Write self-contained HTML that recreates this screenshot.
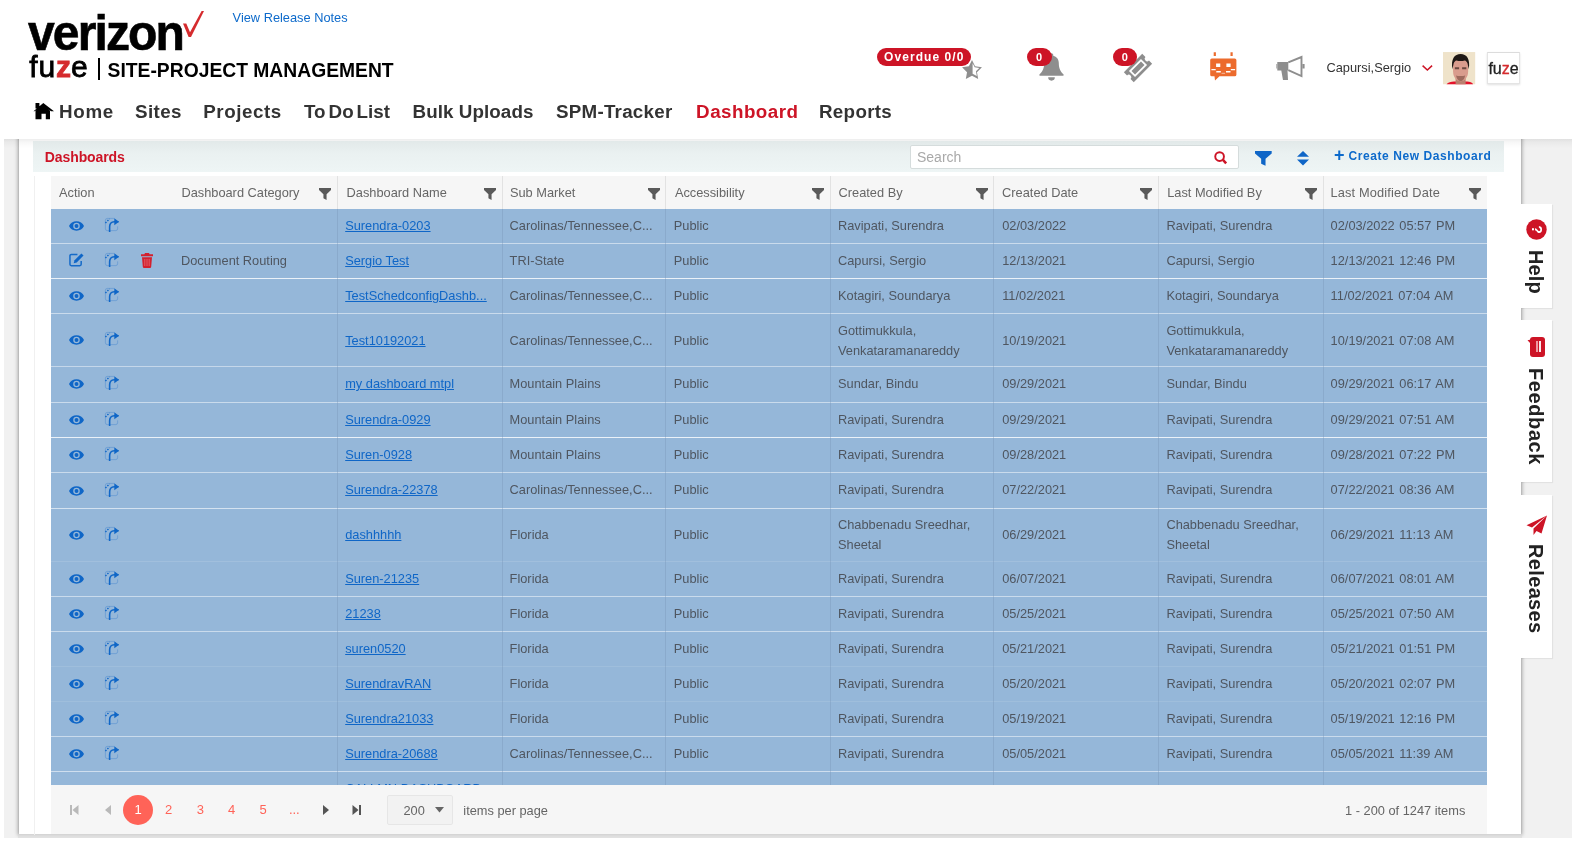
<!DOCTYPE html>
<html lang="en"><head><meta charset="utf-8"><title>Fuze | Site-Project Management - Dashboards</title>
<style>
html,body{margin:0;padding:0}
body{width:1576px;height:850px;position:relative;overflow:hidden;background:#fff;
 font-family:"Liberation Sans",Arial,sans-serif;color:#333;-webkit-font-smoothing:antialiased;will-change:transform}
svg{display:block;overflow:visible}
.abs{position:absolute}

/* ---------- top header ---------- */
.vz{position:absolute;left:28.3px;top:7.6px;font-weight:bold;font-size:50px;letter-spacing:-2px;color:#000;line-height:1;white-space:nowrap;transform-origin:0 0;transform:scaleX(.962);-webkit-text-stroke:.6px #000}
.vzcheck{position:absolute;left:183px;top:11.2px;width:21px;height:26.2px}
.relnotes{position:absolute;left:232.6px;top:11.4px;font-size:12.8px;line-height:14px;color:#0d6acb;white-space:nowrap}
.fuze{position:absolute;left:29.3px;top:52px;font-size:30px;line-height:30px;color:#000;white-space:nowrap;letter-spacing:.8px;-webkit-text-stroke:.8px currentColor}
.fuze i{font-style:normal;color:#d52b2e;font-weight:bold;letter-spacing:0}
.vbar{position:absolute;left:98.4px;top:57.7px;width:2px;height:22.3px;background:#000}
.spm{position:absolute;left:107.6px;top:59.8px;font-size:19.3px;line-height:22px;font-weight:bold;color:#000;white-space:nowrap}

.nav{position:absolute;top:101px;height:22px;line-height:22px;font-size:18.8px;font-weight:bold;color:#333;white-space:nowrap}
.nav.on{color:#cd1426}
.homeic{position:absolute;left:34.5px;top:102.8px;width:18px;height:16.2px}

.pill{position:absolute;top:47.6px;height:18px;border-radius:9px;background:#cd1426;color:#fff;font-weight:bold;font-size:12px;line-height:18px;text-align:center;white-space:nowrap;overflow:hidden}
.hic{position:absolute}
.uname{position:absolute;left:1326.5px;top:60px;font-size:12.8px;line-height:15px;color:#333;white-space:nowrap}
.chev{position:absolute;left:1422px;top:64.6px;width:10.7px;height:5.8px}
.photo{position:absolute;left:1443px;top:52px;width:32.2px;height:32.3px}
.fzbox{position:absolute;left:1487px;top:52px;width:33px;height:32px;background:#fff;border:1px solid #e4e4e4;box-sizing:border-box;box-shadow:0 1px 2px rgba(0,0,0,.12);
  font-size:16px;line-height:31px;text-align:center;color:#222;-webkit-text-stroke:.3px currentColor;border-top:1.5px solid #dcdcdc}
.fzbox i{font-style:normal;color:#d52b2e}

/* ---------- shell ---------- */
.shell{position:absolute;left:4px;top:139px;width:1568px;height:699px;background:#f1f1f1;overflow:hidden}
.card{position:absolute;left:15px;top:-8px;width:1501.5px;height:703px;background:#fff;
 box-shadow:0 0 4px 1px rgba(0,0,0,.33),0 2px 2px rgba(0,0,0,.1)}
.card:after{content:"";position:absolute;left:-1.5px;right:-1.5px;top:100%;height:5px;background:linear-gradient(#d2d2d2,#dedede 40%,#e4e4e4)}
.shell:after{content:"";position:absolute;left:0;top:0;width:100%;height:9px;background:linear-gradient(rgba(0,0,0,.07),rgba(0,0,0,.03) 35%,rgba(0,0,0,0))}
.phead{position:absolute;left:33px;top:141.3px;width:1471px;height:30.5px;
 background:linear-gradient(#e2e9e9,#eaf1f1 40%,#eef5f5)}
.ptitle{position:absolute;left:11.8px;top:7.8px;font-size:14px;line-height:16px;font-weight:bold;color:#cd1426;letter-spacing:-0.1px}
.search{position:absolute;left:877px;top:3.9px;width:329px;height:23.5px;box-sizing:border-box;background:#fff;border:1px solid #d5dcdc;border-radius:2px}
.search .ph{position:absolute;left:6px;top:2.6px;font-size:14px;line-height:17px;color:#a9a9a9}
.search .mag{position:absolute;right:11px;top:4.4px;width:13.5px;height:13.5px}
.tfilter{position:absolute;left:1222.2px;top:10.1px;width:16.7px;height:14.8px;fill:#0f66c7}
.tsort{position:absolute;left:1263.6px;top:10.1px;width:12px;height:14.4px}
.create{position:absolute;left:1301px;top:7px;font-size:12px;letter-spacing:.58px;line-height:15px;font-weight:bold;color:#0d6acb;white-space:nowrap}
.create .plus{font-size:18px;line-height:15px;font-weight:bold;vertical-align:-1.5px;letter-spacing:0}
.pborder{position:absolute;left:33.5px;top:176px;width:1470px;height:658.5px;border-left:1.6px solid #f0f0f0;box-sizing:border-box}

/* ---------- grid ---------- */
.grid{position:absolute;left:51px;top:176.4px;width:1436.3px;height:658px;font-size:12.8px;color:#555}
.ghead{position:absolute;left:0;top:0;width:100%;height:32.7px;background:#f6f6f6}
.th{position:absolute;top:0;height:32.7px;box-sizing:border-box;padding-left:1px;color:#666;line-height:32px;white-space:nowrap}
.hs{position:absolute;top:0;width:1px;height:100%;background:#e2e2e2}
.vs{position:absolute;top:0;width:1px;height:100%;background:rgba(120,150,185,.38)}
.th span{position:absolute;left:8px;top:1px}
.th .hf{position:absolute;right:6.4px;top:11.4px;width:12px;height:12px;fill:#5a5a5a}
.gbody{position:absolute;left:0;top:32.7px;width:100%;height:575.8px;overflow:hidden;background:#95b7d9}
.tr{position:absolute;left:0;width:100%;box-sizing:border-box;border-bottom:1.2px solid rgba(255,255,255,.45)}
.td{position:absolute;top:0;height:100%;box-sizing:border-box;padding-left:1px;display:flex;align-items:center;line-height:20.3px;white-space:nowrap;overflow:hidden;color:#4f5660}
.td.nb>span{padding-left:6.6px}
.td>span{padding-left:6.6px}
.tr.r4 .td>span{padding-top:2px}
.td.lastc>span{word-spacing:1.1px}
.lnk{color:#0f66c7;text-decoration:underline}
.ic{position:absolute;top:50%}
.ic.eye{left:18px;width:15px;height:10px;margin-top:-5px}
.ic.edit{left:18px;width:15px;height:14px;margin-top:-8px}
.ic.share{left:53px;width:15px;height:15px;margin-top:-9px}
.ic.trash{left:90px;width:12px;height:15px;margin-top:-8px}

/* ---------- pager ---------- */
.pager{position:absolute;left:0;top:608.5px;width:100%;height:49.5px;background:#f6f6f6;color:#656565}
.pg{position:absolute;top:17px;width:16px;height:16px;fill:#555}
.pg.dis{fill:#b9b9b9}
.pn{position:absolute;top:10px;width:30px;height:30px;line-height:30px;text-align:center;color:#ff6358;font-size:13px}
.pn.cur{background:#ff6358;color:#fff;border-radius:50%}
.psel{position:absolute;left:336px;top:19.5px;width:66px;height:30px;margin-top:-9.5px;box-sizing:border-box;background:#f2f2f2;border:1px solid #e6e6e6;border-radius:2px}
.psel span{position:absolute;left:15.5px;top:1px;line-height:27px;font-size:12.8px;color:#656565}
.psel svg{position:absolute;left:47px;top:11px;width:9px;height:5.5px;fill:#656565}
.ipp{position:absolute;left:412.3px;top:17px;line-height:18px;font-size:12.8px;white-space:nowrap}
.pinfo{position:absolute;right:22px;top:17px;line-height:18px;font-size:12.8px;white-space:nowrap}

/* ---------- side tabs ---------- */
.tab{position:absolute;left:1521px;width:30.5px;background:#fff;box-shadow:1px 1px 1px rgba(0,0,0,.06)}
.tab .ti{position:absolute;left:5px;top:15px;width:21px;height:21px}
.tab span{position:absolute;left:15px;top:47px;transform-origin:0 0;transform:rotate(90deg) translate(0,-50%);font-weight:bold;font-size:20px;line-height:24px;color:#222;white-space:nowrap;letter-spacing:0.2px}
</style></head>
<body>
<div class="vz">verizon</div><svg class="vzcheck" viewBox="0 0 21 26"><path fill="#d52b2e" d="M0 12.3h3.3l3.7 8.9L18.6 0H21L8 26H5.6z"/></svg><a class="relnotes">View Release Notes</a><div class="fuze">fu<i>z</i>e</div><div class="vbar"></div><div class="spm">SITE-PROJECT MANAGEMENT</div>
<svg preserveAspectRatio="none" class="homeic" viewBox="0 0 18 16.2"><path fill="#000" d="M8.3 0L19 8.3H16L8.3 2.4-.500 8.3H-1.5zM.500 0h3.9v5.5H.500zM.500 7.8L8.3 2 15 7.8v8.4h-4.2v-5.4H6.5v5.4h-6z"/></svg><a class="nav" style="left:59px;letter-spacing:.67px">Home</a><a class="nav" style="left:135px;letter-spacing:.4px">Sites</a><a class="nav" style="left:203.2px;letter-spacing:.56px">Projects</a><a class="nav" style="left:304px;word-spacing:-2.2px">To Do List</a><a class="nav" style="left:412.6px;letter-spacing:.07px">Bulk Uploads</a><a class="nav" style="left:556px;letter-spacing:.24px">SPM-Tracker</a><a class="nav on" style="left:696.1px;letter-spacing:.47px">Dashboard</a><a class="nav" style="left:819px;letter-spacing:.3px">Reports</a>
<div class="pill" style="left:876.5px;width:94.5px;letter-spacing:1.05px;text-indent:1px">Overdue 0/0</div><svg class="hic" style="left:961.5px;top:60px;width:20px;height:19px" viewBox="0 0 20 19.1"><path fill="#8e8e8e" d="M10 0l3.1 6.3 6.9 1-5 4.9 1.2 6.9L10 15.8 3.8 19.1 5 12.2 0 7.3l6.9-1z"/><path fill="#fff" d="M10.6 3.2l2.1 4.2 4.6.700-3.3 3.3.800 4.6-4.2-2.2z"/></svg><svg class="hic" style="left:1039px;top:53px;width:25px;height:28px" viewBox="0 0 24 26.2"><path fill="#8e8e8e" d="M12 0c1 0 1.7.700 1.7 1.7v.600c3.2.800 5.3 3.5 5.3 7 0 5.3 1.8 8.5 4.4 10.7.600.5.200 1.5-.600 1.5H1.2c-.800 0-1.2-1-.600-1.5C3.2 17.8 5 14.6 5 9.3c0-3.5 2.1-6.2 5.3-7v-.600C10.3.700 11 0 12 0zM8.8 23h6.4a3.2 3.2 0 0 1-6.4 0z"/></svg><div class="pill" style="left:1026.5px;width:25px;font-size:11px">0</div><svg class="hic" style="left:1123.5px;top:53.5px;width:28px;height:28px" viewBox="0 0 28 28"><g transform="rotate(-45 14 14)"><path fill="#8e8e8e" fill-rule="evenodd" d="M1 7h26v4.5a2.5 2.5 0 0 0 0 5V21H1v-4.5a2.5 2.5 0 0 0 0-5zM5.5 9.7v8.6h17V9.7zM7.3 11.5h13.4v5H7.3z"/></g></svg><div class="pill" style="left:1112.5px;width:24.5px;font-size:11px">0</div><svg class="hic" style="left:1210.4px;top:51.5px;width:26.6px;height:28.8px" viewBox="0 0 26.6 28.8"><path fill="#ec6b2d" d="M3.7.300h2.2v3.8H3.7zM20.5.300h2.2v3.8h-2.2zM1.8 6.4h23a1.6 1.6 0 0 1 1.6 1.6v14.7a1.6 1.6 0 0 1-1.6 1.6H9.5L5 28.5l-.500-4.2H1.8a1.6 1.6 0 0 1-1.6-1.6V8a1.6 1.6 0 0 1 1.6-1.6z"/><path fill="#fff" d="M6.1 11.6h4.2v3.3H6.1zM16.4 11.6h4.2v3.3h-4.2zM1.4 16.9h4.3v1.3H1.4zM20.8 16.9h4.3v1.3h-4.3zM6.3 19h4.5v1.4H6.3zM16 19h4.5v1.4H16z"/><path fill="#fff" opacity=".55" d="M11.5 20.8h3.6v1h-3.6z"/></svg><svg class="hic" style="left:1275.7px;top:56px;width:28.6px;height:24px" viewBox="0 0 28.6 24"><path fill="#8e8e8e" d="M1.3 6h11v8.5h-11zM5.3 14.5h6.2l.500 9.5H7z"/><path fill="#8e8e8e" opacity=".6" d="M0 8h1.3v4.5H0z"/><path fill="none" stroke="#8e8e8e" stroke-width="1.9" d="M12.3 6.3L25.5 1v19L12.3 14.2"/><path fill="#8e8e8e" d="M26.4 8h2.2v4.5h-2.2z"/></svg><span class="uname">Capursi,Sergio</span><svg class="chev" viewBox="0 0 10.7 5.8"><path fill="none" stroke="#cd1426" stroke-width="1.5" d="M.600.6l4.75 4.4 4.75-4.4"/></svg><svg class="photo" viewBox="0 0 32 32"><rect width="32" height="32" fill="#efe3ca"/><path fill="#e5112b" d="M3.5 32c1.5-2 4.5-2.6 7.5-2.8h13c2.5.200 5 .800 6 2.8z"/><path fill="#b9806f" d="M12.5 24h10v8h-10z"/><path fill="#d99c8d" d="M10 12c0-5 3-7.5 7.5-7.5S25 7 25 12v7c0 5.5-3 10-7.5 10S10 24.5 10 19z"/><path fill="#1f1916" d="M9.4 17C7.6 7 11.5 2 17.5 2s9.9 5 8.1 15l-1.2-5.5c-.700-2-1.6-2.8-2.8-3.1-2.4.800-5.8.800-8.2 0-1.2.300-2.1 1.1-2.8 3.1z"/><path fill="#4e332c" d="M11.8 15.2H16v2h-4.2zM19 15.2h4.2v2H19z" opacity=".8"/><path fill="#8a5a4e" d="M13 23c1.5 1.2 7.5 1.2 9 0-.500 3.5-2.3 5.8-4.5 5.8S13.5 26.5 13 23z" opacity=".75"/></svg><div class="fzbox">fu<i>z</i>e</div>
<div class="shell"><div class="card"></div></div>
<div class="phead"><span class="ptitle">Dashboards</span><div class="search"><span class="ph">Search</span><svg class="mag" viewBox="0 0 14 14"><circle cx="5.8" cy="5.8" r="4.5" fill="none" stroke="#cd1426" stroke-width="2"/><path d="M9.3 9.3L12.6 12.8" stroke="#cd1426" stroke-width="2.6" stroke-linecap="butt"/></svg></div><svg class="tfilter" viewBox="0 0 13 13" preserveAspectRatio="none"><path d="M0 0h13v2.3L8.2 6.8V13L4.8 11.2V6.8L0 2.3z"/></svg><svg class="tsort" viewBox="0 0 12 16" preserveAspectRatio="none"><path fill="#0f66c7" d="M6 0l6 6.5H0zM6 16l6-6.5H0z"/></svg><span class="create"><b class="plus">+</b> Create New Dashboard</span></div>
<div class="pborder"></div>
<div class="grid">
<div class="ghead"><div class="th first" style="left:0px;width:122.4px"><span style="left:8px">Action</span></div><div class="th first" style="left:122.4px;width:164.2px"><span style="left:8px">Dashboard Category</span><svg class="hf" viewBox="0 0 13 13"><path d="M0 0h13v2.3L8.2 6.8V13L4.8 11.2V6.8L0 2.3z"/></svg></div><div class="th" style="left:286.6px;width:164.4px"><span style="left:9px">Dashboard Name</span><svg class="hf" viewBox="0 0 13 13"><path d="M0 0h13v2.3L8.2 6.8V13L4.8 11.2V6.8L0 2.3z"/></svg></div><div class="th" style="left:451px;width:164.2px"><span style="left:7.9px">Sub Market</span><svg class="hf" viewBox="0 0 13 13"><path d="M0 0h13v2.3L8.2 6.8V13L4.8 11.2V6.8L0 2.3z"/></svg></div><div class="th" style="left:615.2px;width:164.2px"><span style="left:8.7px">Accessibility</span><svg class="hf" viewBox="0 0 13 13"><path d="M0 0h13v2.3L8.2 6.8V13L4.8 11.2V6.8L0 2.3z"/></svg></div><div class="th" style="left:779.4px;width:164.2px"><span style="left:8.2px">Created By</span><svg class="hf" viewBox="0 0 13 13"><path d="M0 0h13v2.3L8.2 6.8V13L4.8 11.2V6.8L0 2.3z"/></svg></div><div class="th" style="left:943.6px;width:164.2px"><span style="left:7.5px">Created Date</span><svg class="hf" viewBox="0 0 13 13"><path d="M0 0h13v2.3L8.2 6.8V13L4.8 11.2V6.8L0 2.3z"/></svg></div><div class="th" style="left:1107.8px;width:164.2px"><span style="left:8.4px">Last Modified By</span><svg class="hf" viewBox="0 0 13 13"><path d="M0 0h13v2.3L8.2 6.8V13L4.8 11.2V6.8L0 2.3z"/></svg></div><div class="th" style="left:1272px;width:164.3px"><span style="left:7.4px;letter-spacing:.16px">Last Modified Date</span><svg class="hf" viewBox="0 0 13 13"><path d="M0 0h13v2.3L8.2 6.8V13L4.8 11.2V6.8L0 2.3z"/></svg></div><i class="hs" style="left:285.9px"></i><i class="hs" style="left:450.6px"></i><i class="hs" style="left:613.8px"></i><i class="hs" style="left:778.9px"></i><i class="hs" style="left:942.2px"></i><i class="hs" style="left:1107.1px"></i><i class="hs" style="left:1271.5px"></i></div>
<div class="gbody">
<div class="tr" style="top:0px;height:35.1px;border-bottom-color:rgba(255,255,255,0.5)"><div class="td act" style="left:0;width:122.4px"><svg class="ic eye" viewBox="0 0 16 10"><path fill="#0f66c7" fill-rule="evenodd" d="M8 0C4.4 0 1.4 2 0 5c1.4 3 4.4 5 8 5s6.6-2 8-5C14.6 2 11.6 0 8 0zm0 1.5a3.5 3.5 0 1 1 0 7 3.5 3.5 0 0 1 0-7z"/><circle cx="8" cy="5" r="2.1" fill="#0f66c7"/></svg><svg class="ic share" viewBox="0 0 16 16"><path fill="none" stroke="#0f66c7" stroke-opacity=".28" stroke-width="1" d="M11 1.5H3.5a2 2 0 0 0-2 2v9a2 2 0 0 0 2 2h9a2 2 0 0 0 2-2V10"/><path fill="none" stroke="#0f66c7" stroke-width="1.7" stroke-linecap="butt" d="M6 16V10.5c0-3 1.5-5.5 5-5.5h4.5"/><path fill="#0f66c7" d="M11 1.3l5 3.7-5 3.7z"/><path fill="none" stroke="#0f66c7" stroke-width="1.5" stroke-dasharray="1.6 1.4" d="M1.5 6.5L6 2"/></svg></div><div class="td nb" style="left:122.4px;width:164.2px"><span></span></div><div class="td" style="left:286.6px;width:164.4px"><span><a class="lnk">Surendra-0203</a></span></div><div class="td" style="left:451px;width:164.2px"><span>Carolinas/Tennessee,C...</span></div><div class="td" style="left:615.2px;width:164.2px"><span>Public</span></div><div class="td" style="left:779.4px;width:164.2px"><span>Ravipati, Surendra</span></div><div class="td" style="left:943.6px;width:164.2px"><span>02/03/2022</span></div><div class="td" style="left:1107.8px;width:164.2px"><span>Ravipati, Surendra</span></div><div class="td lastc" style="left:1272px;width:164.3px"><span>02/03/2022 05:57 PM</span></div></div>
<div class="tr" style="top:35.1px;height:35.1px;border-bottom-color:rgba(255,255,255,0.8)"><div class="td act" style="left:0;width:122.4px"><svg class="ic edit" viewBox="0 0 16 14"><path fill="none" stroke="#0f66c7" stroke-width="1.6" d="M9 1H2.5A1.5 1.5 0 0 0 1 2.5v9A1.5 1.5 0 0 0 2.5 13h9a1.5 1.5 0 0 0 1.5-1.5V8" stroke-opacity=".95"/><path fill="#0f66c7" d="M13.2 0l2.3 2.3-7.3 7.3L5 10.5l.900-3.2z"/></svg><svg class="ic share" viewBox="0 0 16 16"><path fill="none" stroke="#0f66c7" stroke-opacity=".28" stroke-width="1" d="M11 1.5H3.5a2 2 0 0 0-2 2v9a2 2 0 0 0 2 2h9a2 2 0 0 0 2-2V10"/><path fill="none" stroke="#0f66c7" stroke-width="1.7" stroke-linecap="butt" d="M6 16V10.5c0-3 1.5-5.5 5-5.5h4.5"/><path fill="#0f66c7" d="M11 1.3l5 3.7-5 3.7z"/><path fill="none" stroke="#0f66c7" stroke-width="1.5" stroke-dasharray="1.6 1.4" d="M1.5 6.5L6 2"/></svg><svg class="ic trash" viewBox="0 0 12 15"><path fill="#d3202e" d="M4 0h4l.600 1.2H12v2H0v-2h3.4zM1 4.2h10l-.800 9.6a1.3 1.3 0 0 1-1.3 1.2H3.1a1.3 1.3 0 0 1-1.3-1.2z"/><path stroke="#e77a83" stroke-width=".7" d="M3.8 6v7M6 6v7M8.2 6v7"/></svg></div><div class="td nb" style="left:122.4px;width:164.2px"><span>Document Routing</span></div><div class="td" style="left:286.6px;width:164.4px"><span><a class="lnk">Sergio Test</a></span></div><div class="td" style="left:451px;width:164.2px"><span>TRI-State</span></div><div class="td" style="left:615.2px;width:164.2px"><span>Public</span></div><div class="td" style="left:779.4px;width:164.2px"><span>Capursi, Sergio</span></div><div class="td" style="left:943.6px;width:164.2px"><span>12/13/2021</span></div><div class="td" style="left:1107.8px;width:164.2px"><span>Capursi, Sergio</span></div><div class="td lastc" style="left:1272px;width:164.3px"><span>12/13/2021 12:46 PM</span></div></div>
<div class="tr" style="top:70.2px;height:34.8px;border-bottom-color:rgba(255,255,255,0.5)"><div class="td act" style="left:0;width:122.4px"><svg class="ic eye" viewBox="0 0 16 10"><path fill="#0f66c7" fill-rule="evenodd" d="M8 0C4.4 0 1.4 2 0 5c1.4 3 4.4 5 8 5s6.6-2 8-5C14.6 2 11.6 0 8 0zm0 1.5a3.5 3.5 0 1 1 0 7 3.5 3.5 0 0 1 0-7z"/><circle cx="8" cy="5" r="2.1" fill="#0f66c7"/></svg><svg class="ic share" viewBox="0 0 16 16"><path fill="none" stroke="#0f66c7" stroke-opacity=".28" stroke-width="1" d="M11 1.5H3.5a2 2 0 0 0-2 2v9a2 2 0 0 0 2 2h9a2 2 0 0 0 2-2V10"/><path fill="none" stroke="#0f66c7" stroke-width="1.7" stroke-linecap="butt" d="M6 16V10.5c0-3 1.5-5.5 5-5.5h4.5"/><path fill="#0f66c7" d="M11 1.3l5 3.7-5 3.7z"/><path fill="none" stroke="#0f66c7" stroke-width="1.5" stroke-dasharray="1.6 1.4" d="M1.5 6.5L6 2"/></svg></div><div class="td nb" style="left:122.4px;width:164.2px"><span></span></div><div class="td" style="left:286.6px;width:164.4px"><span><a class="lnk">TestSchedconfigDashb...</a></span></div><div class="td" style="left:451px;width:164.2px"><span>Carolinas/Tennessee,C...</span></div><div class="td" style="left:615.2px;width:164.2px"><span>Public</span></div><div class="td" style="left:779.4px;width:164.2px"><span>Kotagiri, Soundarya</span></div><div class="td" style="left:943.6px;width:164.2px"><span>11/02/2021</span></div><div class="td" style="left:1107.8px;width:164.2px"><span>Kotagiri, Soundarya</span></div><div class="td lastc" style="left:1272px;width:164.3px"><span>11/02/2021 07:04 AM</span></div></div>
<div class="tr r4" style="top:105px;height:52.5px;border-bottom-color:rgba(255,255,255,0.45)"><div class="td act" style="left:0;width:122.4px"><svg class="ic eye" viewBox="0 0 16 10"><path fill="#0f66c7" fill-rule="evenodd" d="M8 0C4.4 0 1.4 2 0 5c1.4 3 4.4 5 8 5s6.6-2 8-5C14.6 2 11.6 0 8 0zm0 1.5a3.5 3.5 0 1 1 0 7 3.5 3.5 0 0 1 0-7z"/><circle cx="8" cy="5" r="2.1" fill="#0f66c7"/></svg><svg class="ic share" viewBox="0 0 16 16"><path fill="none" stroke="#0f66c7" stroke-opacity=".28" stroke-width="1" d="M11 1.5H3.5a2 2 0 0 0-2 2v9a2 2 0 0 0 2 2h9a2 2 0 0 0 2-2V10"/><path fill="none" stroke="#0f66c7" stroke-width="1.7" stroke-linecap="butt" d="M6 16V10.5c0-3 1.5-5.5 5-5.5h4.5"/><path fill="#0f66c7" d="M11 1.3l5 3.7-5 3.7z"/><path fill="none" stroke="#0f66c7" stroke-width="1.5" stroke-dasharray="1.6 1.4" d="M1.5 6.5L6 2"/></svg></div><div class="td nb" style="left:122.4px;width:164.2px"><span></span></div><div class="td" style="left:286.6px;width:164.4px"><span><a class="lnk">Test10192021</a></span></div><div class="td" style="left:451px;width:164.2px"><span>Carolinas/Tennessee,C...</span></div><div class="td" style="left:615.2px;width:164.2px"><span>Public</span></div><div class="td" style="left:779.4px;width:164.2px"><span>Gottimukkula,<br>Venkataramanareddy</span></div><div class="td" style="left:943.6px;width:164.2px"><span>10/19/2021</span></div><div class="td" style="left:1107.8px;width:164.2px"><span>Gottimukkula,<br>Venkataramanareddy</span></div><div class="td lastc" style="left:1272px;width:164.3px"><span>10/19/2021 07:08 AM</span></div></div>
<div class="tr" style="top:157.5px;height:36.2px;border-bottom-color:rgba(255,255,255,0.5)"><div class="td act" style="left:0;width:122.4px"><svg class="ic eye" viewBox="0 0 16 10"><path fill="#0f66c7" fill-rule="evenodd" d="M8 0C4.4 0 1.4 2 0 5c1.4 3 4.4 5 8 5s6.6-2 8-5C14.6 2 11.6 0 8 0zm0 1.5a3.5 3.5 0 1 1 0 7 3.5 3.5 0 0 1 0-7z"/><circle cx="8" cy="5" r="2.1" fill="#0f66c7"/></svg><svg class="ic share" viewBox="0 0 16 16"><path fill="none" stroke="#0f66c7" stroke-opacity=".28" stroke-width="1" d="M11 1.5H3.5a2 2 0 0 0-2 2v9a2 2 0 0 0 2 2h9a2 2 0 0 0 2-2V10"/><path fill="none" stroke="#0f66c7" stroke-width="1.7" stroke-linecap="butt" d="M6 16V10.5c0-3 1.5-5.5 5-5.5h4.5"/><path fill="#0f66c7" d="M11 1.3l5 3.7-5 3.7z"/><path fill="none" stroke="#0f66c7" stroke-width="1.5" stroke-dasharray="1.6 1.4" d="M1.5 6.5L6 2"/></svg></div><div class="td nb" style="left:122.4px;width:164.2px"><span></span></div><div class="td" style="left:286.6px;width:164.4px"><span><a class="lnk">my dashboard mtpl</a></span></div><div class="td" style="left:451px;width:164.2px"><span>Mountain Plains</span></div><div class="td" style="left:615.2px;width:164.2px"><span>Public</span></div><div class="td" style="left:779.4px;width:164.2px"><span>Sundar, Bindu</span></div><div class="td" style="left:943.6px;width:164.2px"><span>09/29/2021</span></div><div class="td" style="left:1107.8px;width:164.2px"><span>Sundar, Bindu</span></div><div class="td lastc" style="left:1272px;width:164.3px"><span>09/29/2021 06:17 AM</span></div></div>
<div class="tr" style="top:193.7px;height:35.5px;border-bottom-color:rgba(255,255,255,0.8)"><div class="td act" style="left:0;width:122.4px"><svg class="ic eye" viewBox="0 0 16 10"><path fill="#0f66c7" fill-rule="evenodd" d="M8 0C4.4 0 1.4 2 0 5c1.4 3 4.4 5 8 5s6.6-2 8-5C14.6 2 11.6 0 8 0zm0 1.5a3.5 3.5 0 1 1 0 7 3.5 3.5 0 0 1 0-7z"/><circle cx="8" cy="5" r="2.1" fill="#0f66c7"/></svg><svg class="ic share" viewBox="0 0 16 16"><path fill="none" stroke="#0f66c7" stroke-opacity=".28" stroke-width="1" d="M11 1.5H3.5a2 2 0 0 0-2 2v9a2 2 0 0 0 2 2h9a2 2 0 0 0 2-2V10"/><path fill="none" stroke="#0f66c7" stroke-width="1.7" stroke-linecap="butt" d="M6 16V10.5c0-3 1.5-5.5 5-5.5h4.5"/><path fill="#0f66c7" d="M11 1.3l5 3.7-5 3.7z"/><path fill="none" stroke="#0f66c7" stroke-width="1.5" stroke-dasharray="1.6 1.4" d="M1.5 6.5L6 2"/></svg></div><div class="td nb" style="left:122.4px;width:164.2px"><span></span></div><div class="td" style="left:286.6px;width:164.4px"><span><a class="lnk">Surendra-0929</a></span></div><div class="td" style="left:451px;width:164.2px"><span>Mountain Plains</span></div><div class="td" style="left:615.2px;width:164.2px"><span>Public</span></div><div class="td" style="left:779.4px;width:164.2px"><span>Ravipati, Surendra</span></div><div class="td" style="left:943.6px;width:164.2px"><span>09/29/2021</span></div><div class="td" style="left:1107.8px;width:164.2px"><span>Ravipati, Surendra</span></div><div class="td lastc" style="left:1272px;width:164.3px"><span>09/29/2021 07:51 AM</span></div></div>
<div class="tr" style="top:229.2px;height:34.8px;border-bottom-color:rgba(255,255,255,0.5)"><div class="td act" style="left:0;width:122.4px"><svg class="ic eye" viewBox="0 0 16 10"><path fill="#0f66c7" fill-rule="evenodd" d="M8 0C4.4 0 1.4 2 0 5c1.4 3 4.4 5 8 5s6.6-2 8-5C14.6 2 11.6 0 8 0zm0 1.5a3.5 3.5 0 1 1 0 7 3.5 3.5 0 0 1 0-7z"/><circle cx="8" cy="5" r="2.1" fill="#0f66c7"/></svg><svg class="ic share" viewBox="0 0 16 16"><path fill="none" stroke="#0f66c7" stroke-opacity=".28" stroke-width="1" d="M11 1.5H3.5a2 2 0 0 0-2 2v9a2 2 0 0 0 2 2h9a2 2 0 0 0 2-2V10"/><path fill="none" stroke="#0f66c7" stroke-width="1.7" stroke-linecap="butt" d="M6 16V10.5c0-3 1.5-5.5 5-5.5h4.5"/><path fill="#0f66c7" d="M11 1.3l5 3.7-5 3.7z"/><path fill="none" stroke="#0f66c7" stroke-width="1.5" stroke-dasharray="1.6 1.4" d="M1.5 6.5L6 2"/></svg></div><div class="td nb" style="left:122.4px;width:164.2px"><span></span></div><div class="td" style="left:286.6px;width:164.4px"><span><a class="lnk">Suren-0928</a></span></div><div class="td" style="left:451px;width:164.2px"><span>Mountain Plains</span></div><div class="td" style="left:615.2px;width:164.2px"><span>Public</span></div><div class="td" style="left:779.4px;width:164.2px"><span>Ravipati, Surendra</span></div><div class="td" style="left:943.6px;width:164.2px"><span>09/28/2021</span></div><div class="td" style="left:1107.8px;width:164.2px"><span>Ravipati, Surendra</span></div><div class="td lastc" style="left:1272px;width:164.3px"><span>09/28/2021 07:22 PM</span></div></div>
<div class="tr" style="top:264px;height:36.1px;border-bottom-color:rgba(255,255,255,0.6)"><div class="td act" style="left:0;width:122.4px"><svg class="ic eye" viewBox="0 0 16 10"><path fill="#0f66c7" fill-rule="evenodd" d="M8 0C4.4 0 1.4 2 0 5c1.4 3 4.4 5 8 5s6.6-2 8-5C14.6 2 11.6 0 8 0zm0 1.5a3.5 3.5 0 1 1 0 7 3.5 3.5 0 0 1 0-7z"/><circle cx="8" cy="5" r="2.1" fill="#0f66c7"/></svg><svg class="ic share" viewBox="0 0 16 16"><path fill="none" stroke="#0f66c7" stroke-opacity=".28" stroke-width="1" d="M11 1.5H3.5a2 2 0 0 0-2 2v9a2 2 0 0 0 2 2h9a2 2 0 0 0 2-2V10"/><path fill="none" stroke="#0f66c7" stroke-width="1.7" stroke-linecap="butt" d="M6 16V10.5c0-3 1.5-5.5 5-5.5h4.5"/><path fill="#0f66c7" d="M11 1.3l5 3.7-5 3.7z"/><path fill="none" stroke="#0f66c7" stroke-width="1.5" stroke-dasharray="1.6 1.4" d="M1.5 6.5L6 2"/></svg></div><div class="td nb" style="left:122.4px;width:164.2px"><span></span></div><div class="td" style="left:286.6px;width:164.4px"><span><a class="lnk">Surendra-22378</a></span></div><div class="td" style="left:451px;width:164.2px"><span>Carolinas/Tennessee,C...</span></div><div class="td" style="left:615.2px;width:164.2px"><span>Public</span></div><div class="td" style="left:779.4px;width:164.2px"><span>Ravipati, Surendra</span></div><div class="td" style="left:943.6px;width:164.2px"><span>07/22/2021</span></div><div class="td" style="left:1107.8px;width:164.2px"><span>Ravipati, Surendra</span></div><div class="td lastc" style="left:1272px;width:164.3px"><span>07/22/2021 08:36 AM</span></div></div>
<div class="tr" style="top:300.1px;height:52.9px;border-bottom-color:rgba(255,255,255,0.12)"><div class="td act" style="left:0;width:122.4px"><svg class="ic eye" viewBox="0 0 16 10"><path fill="#0f66c7" fill-rule="evenodd" d="M8 0C4.4 0 1.4 2 0 5c1.4 3 4.4 5 8 5s6.6-2 8-5C14.6 2 11.6 0 8 0zm0 1.5a3.5 3.5 0 1 1 0 7 3.5 3.5 0 0 1 0-7z"/><circle cx="8" cy="5" r="2.1" fill="#0f66c7"/></svg><svg class="ic share" viewBox="0 0 16 16"><path fill="none" stroke="#0f66c7" stroke-opacity=".28" stroke-width="1" d="M11 1.5H3.5a2 2 0 0 0-2 2v9a2 2 0 0 0 2 2h9a2 2 0 0 0 2-2V10"/><path fill="none" stroke="#0f66c7" stroke-width="1.7" stroke-linecap="butt" d="M6 16V10.5c0-3 1.5-5.5 5-5.5h4.5"/><path fill="#0f66c7" d="M11 1.3l5 3.7-5 3.7z"/><path fill="none" stroke="#0f66c7" stroke-width="1.5" stroke-dasharray="1.6 1.4" d="M1.5 6.5L6 2"/></svg></div><div class="td nb" style="left:122.4px;width:164.2px"><span></span></div><div class="td" style="left:286.6px;width:164.4px"><span><a class="lnk">dashhhhh</a></span></div><div class="td" style="left:451px;width:164.2px"><span>Florida</span></div><div class="td" style="left:615.2px;width:164.2px"><span>Public</span></div><div class="td" style="left:779.4px;width:164.2px"><span>Chabbenadu Sreedhar,<br>Sheetal</span></div><div class="td" style="left:943.6px;width:164.2px"><span>06/29/2021</span></div><div class="td" style="left:1107.8px;width:164.2px"><span>Chabbenadu Sreedhar,<br>Sheetal</span></div><div class="td lastc" style="left:1272px;width:164.3px"><span>06/29/2021 11:13 AM</span></div></div>
<div class="tr" style="top:353px;height:35.2px;border-bottom-color:rgba(255,255,255,0.5)"><div class="td act" style="left:0;width:122.4px"><svg class="ic eye" viewBox="0 0 16 10"><path fill="#0f66c7" fill-rule="evenodd" d="M8 0C4.4 0 1.4 2 0 5c1.4 3 4.4 5 8 5s6.6-2 8-5C14.6 2 11.6 0 8 0zm0 1.5a3.5 3.5 0 1 1 0 7 3.5 3.5 0 0 1 0-7z"/><circle cx="8" cy="5" r="2.1" fill="#0f66c7"/></svg><svg class="ic share" viewBox="0 0 16 16"><path fill="none" stroke="#0f66c7" stroke-opacity=".28" stroke-width="1" d="M11 1.5H3.5a2 2 0 0 0-2 2v9a2 2 0 0 0 2 2h9a2 2 0 0 0 2-2V10"/><path fill="none" stroke="#0f66c7" stroke-width="1.7" stroke-linecap="butt" d="M6 16V10.5c0-3 1.5-5.5 5-5.5h4.5"/><path fill="#0f66c7" d="M11 1.3l5 3.7-5 3.7z"/><path fill="none" stroke="#0f66c7" stroke-width="1.5" stroke-dasharray="1.6 1.4" d="M1.5 6.5L6 2"/></svg></div><div class="td nb" style="left:122.4px;width:164.2px"><span></span></div><div class="td" style="left:286.6px;width:164.4px"><span><a class="lnk">Suren-21235</a></span></div><div class="td" style="left:451px;width:164.2px"><span>Florida</span></div><div class="td" style="left:615.2px;width:164.2px"><span>Public</span></div><div class="td" style="left:779.4px;width:164.2px"><span>Ravipati, Surendra</span></div><div class="td" style="left:943.6px;width:164.2px"><span>06/07/2021</span></div><div class="td" style="left:1107.8px;width:164.2px"><span>Ravipati, Surendra</span></div><div class="td lastc" style="left:1272px;width:164.3px"><span>06/07/2021 08:01 AM</span></div></div>
<div class="tr" style="top:388.2px;height:34.7px;border-bottom-color:rgba(255,255,255,0.5)"><div class="td act" style="left:0;width:122.4px"><svg class="ic eye" viewBox="0 0 16 10"><path fill="#0f66c7" fill-rule="evenodd" d="M8 0C4.4 0 1.4 2 0 5c1.4 3 4.4 5 8 5s6.6-2 8-5C14.6 2 11.6 0 8 0zm0 1.5a3.5 3.5 0 1 1 0 7 3.5 3.5 0 0 1 0-7z"/><circle cx="8" cy="5" r="2.1" fill="#0f66c7"/></svg><svg class="ic share" viewBox="0 0 16 16"><path fill="none" stroke="#0f66c7" stroke-opacity=".28" stroke-width="1" d="M11 1.5H3.5a2 2 0 0 0-2 2v9a2 2 0 0 0 2 2h9a2 2 0 0 0 2-2V10"/><path fill="none" stroke="#0f66c7" stroke-width="1.7" stroke-linecap="butt" d="M6 16V10.5c0-3 1.5-5.5 5-5.5h4.5"/><path fill="#0f66c7" d="M11 1.3l5 3.7-5 3.7z"/><path fill="none" stroke="#0f66c7" stroke-width="1.5" stroke-dasharray="1.6 1.4" d="M1.5 6.5L6 2"/></svg></div><div class="td nb" style="left:122.4px;width:164.2px"><span></span></div><div class="td" style="left:286.6px;width:164.4px"><span><a class="lnk">21238</a></span></div><div class="td" style="left:451px;width:164.2px"><span>Florida</span></div><div class="td" style="left:615.2px;width:164.2px"><span>Public</span></div><div class="td" style="left:779.4px;width:164.2px"><span>Ravipati, Surendra</span></div><div class="td" style="left:943.6px;width:164.2px"><span>05/25/2021</span></div><div class="td" style="left:1107.8px;width:164.2px"><span>Ravipati, Surendra</span></div><div class="td lastc" style="left:1272px;width:164.3px"><span>05/25/2021 07:50 AM</span></div></div>
<div class="tr" style="top:422.9px;height:35.1px;border-bottom-color:rgba(255,255,255,0.1)"><div class="td act" style="left:0;width:122.4px"><svg class="ic eye" viewBox="0 0 16 10"><path fill="#0f66c7" fill-rule="evenodd" d="M8 0C4.4 0 1.4 2 0 5c1.4 3 4.4 5 8 5s6.6-2 8-5C14.6 2 11.6 0 8 0zm0 1.5a3.5 3.5 0 1 1 0 7 3.5 3.5 0 0 1 0-7z"/><circle cx="8" cy="5" r="2.1" fill="#0f66c7"/></svg><svg class="ic share" viewBox="0 0 16 16"><path fill="none" stroke="#0f66c7" stroke-opacity=".28" stroke-width="1" d="M11 1.5H3.5a2 2 0 0 0-2 2v9a2 2 0 0 0 2 2h9a2 2 0 0 0 2-2V10"/><path fill="none" stroke="#0f66c7" stroke-width="1.7" stroke-linecap="butt" d="M6 16V10.5c0-3 1.5-5.5 5-5.5h4.5"/><path fill="#0f66c7" d="M11 1.3l5 3.7-5 3.7z"/><path fill="none" stroke="#0f66c7" stroke-width="1.5" stroke-dasharray="1.6 1.4" d="M1.5 6.5L6 2"/></svg></div><div class="td nb" style="left:122.4px;width:164.2px"><span></span></div><div class="td" style="left:286.6px;width:164.4px"><span><a class="lnk">suren0520</a></span></div><div class="td" style="left:451px;width:164.2px"><span>Florida</span></div><div class="td" style="left:615.2px;width:164.2px"><span>Public</span></div><div class="td" style="left:779.4px;width:164.2px"><span>Ravipati, Surendra</span></div><div class="td" style="left:943.6px;width:164.2px"><span>05/21/2021</span></div><div class="td" style="left:1107.8px;width:164.2px"><span>Ravipati, Surendra</span></div><div class="td lastc" style="left:1272px;width:164.3px"><span>05/21/2021 01:51 PM</span></div></div>
<div class="tr" style="top:458px;height:35.3px;border-bottom-color:rgba(255,255,255,0.1)"><div class="td act" style="left:0;width:122.4px"><svg class="ic eye" viewBox="0 0 16 10"><path fill="#0f66c7" fill-rule="evenodd" d="M8 0C4.4 0 1.4 2 0 5c1.4 3 4.4 5 8 5s6.6-2 8-5C14.6 2 11.6 0 8 0zm0 1.5a3.5 3.5 0 1 1 0 7 3.5 3.5 0 0 1 0-7z"/><circle cx="8" cy="5" r="2.1" fill="#0f66c7"/></svg><svg class="ic share" viewBox="0 0 16 16"><path fill="none" stroke="#0f66c7" stroke-opacity=".28" stroke-width="1" d="M11 1.5H3.5a2 2 0 0 0-2 2v9a2 2 0 0 0 2 2h9a2 2 0 0 0 2-2V10"/><path fill="none" stroke="#0f66c7" stroke-width="1.7" stroke-linecap="butt" d="M6 16V10.5c0-3 1.5-5.5 5-5.5h4.5"/><path fill="#0f66c7" d="M11 1.3l5 3.7-5 3.7z"/><path fill="none" stroke="#0f66c7" stroke-width="1.5" stroke-dasharray="1.6 1.4" d="M1.5 6.5L6 2"/></svg></div><div class="td nb" style="left:122.4px;width:164.2px"><span></span></div><div class="td" style="left:286.6px;width:164.4px"><span><a class="lnk">SurendravRAN</a></span></div><div class="td" style="left:451px;width:164.2px"><span>Florida</span></div><div class="td" style="left:615.2px;width:164.2px"><span>Public</span></div><div class="td" style="left:779.4px;width:164.2px"><span>Ravipati, Surendra</span></div><div class="td" style="left:943.6px;width:164.2px"><span>05/20/2021</span></div><div class="td" style="left:1107.8px;width:164.2px"><span>Ravipati, Surendra</span></div><div class="td lastc" style="left:1272px;width:164.3px"><span>05/20/2021 02:07 PM</span></div></div>
<div class="tr" style="top:493.3px;height:35.1px;border-bottom-color:rgba(255,255,255,0.5)"><div class="td act" style="left:0;width:122.4px"><svg class="ic eye" viewBox="0 0 16 10"><path fill="#0f66c7" fill-rule="evenodd" d="M8 0C4.4 0 1.4 2 0 5c1.4 3 4.4 5 8 5s6.6-2 8-5C14.6 2 11.6 0 8 0zm0 1.5a3.5 3.5 0 1 1 0 7 3.5 3.5 0 0 1 0-7z"/><circle cx="8" cy="5" r="2.1" fill="#0f66c7"/></svg><svg class="ic share" viewBox="0 0 16 16"><path fill="none" stroke="#0f66c7" stroke-opacity=".28" stroke-width="1" d="M11 1.5H3.5a2 2 0 0 0-2 2v9a2 2 0 0 0 2 2h9a2 2 0 0 0 2-2V10"/><path fill="none" stroke="#0f66c7" stroke-width="1.7" stroke-linecap="butt" d="M6 16V10.5c0-3 1.5-5.5 5-5.5h4.5"/><path fill="#0f66c7" d="M11 1.3l5 3.7-5 3.7z"/><path fill="none" stroke="#0f66c7" stroke-width="1.5" stroke-dasharray="1.6 1.4" d="M1.5 6.5L6 2"/></svg></div><div class="td nb" style="left:122.4px;width:164.2px"><span></span></div><div class="td" style="left:286.6px;width:164.4px"><span><a class="lnk">Surendra21033</a></span></div><div class="td" style="left:451px;width:164.2px"><span>Florida</span></div><div class="td" style="left:615.2px;width:164.2px"><span>Public</span></div><div class="td" style="left:779.4px;width:164.2px"><span>Ravipati, Surendra</span></div><div class="td" style="left:943.6px;width:164.2px"><span>05/19/2021</span></div><div class="td" style="left:1107.8px;width:164.2px"><span>Ravipati, Surendra</span></div><div class="td lastc" style="left:1272px;width:164.3px"><span>05/19/2021 12:16 PM</span></div></div>
<div class="tr" style="top:528.4px;height:34.7px;border-bottom-color:rgba(255,255,255,0.55)"><div class="td act" style="left:0;width:122.4px"><svg class="ic eye" viewBox="0 0 16 10"><path fill="#0f66c7" fill-rule="evenodd" d="M8 0C4.4 0 1.4 2 0 5c1.4 3 4.4 5 8 5s6.6-2 8-5C14.6 2 11.6 0 8 0zm0 1.5a3.5 3.5 0 1 1 0 7 3.5 3.5 0 0 1 0-7z"/><circle cx="8" cy="5" r="2.1" fill="#0f66c7"/></svg><svg class="ic share" viewBox="0 0 16 16"><path fill="none" stroke="#0f66c7" stroke-opacity=".28" stroke-width="1" d="M11 1.5H3.5a2 2 0 0 0-2 2v9a2 2 0 0 0 2 2h9a2 2 0 0 0 2-2V10"/><path fill="none" stroke="#0f66c7" stroke-width="1.7" stroke-linecap="butt" d="M6 16V10.5c0-3 1.5-5.5 5-5.5h4.5"/><path fill="#0f66c7" d="M11 1.3l5 3.7-5 3.7z"/><path fill="none" stroke="#0f66c7" stroke-width="1.5" stroke-dasharray="1.6 1.4" d="M1.5 6.5L6 2"/></svg></div><div class="td nb" style="left:122.4px;width:164.2px"><span></span></div><div class="td" style="left:286.6px;width:164.4px"><span><a class="lnk">Surendra-20688</a></span></div><div class="td" style="left:451px;width:164.2px"><span>Carolinas/Tennessee,C...</span></div><div class="td" style="left:615.2px;width:164.2px"><span>Public</span></div><div class="td" style="left:779.4px;width:164.2px"><span>Ravipati, Surendra</span></div><div class="td" style="left:943.6px;width:164.2px"><span>05/05/2021</span></div><div class="td" style="left:1107.8px;width:164.2px"><span>Ravipati, Surendra</span></div><div class="td lastc" style="left:1272px;width:164.3px"><span>05/05/2021 11:39 AM</span></div></div>
<div class="tr" style="top:563.1px;height:35.4px;border-bottom-color:rgba(255,255,255,0.5)"><div class="td act" style="left:0;width:122.4px"></div><div class="td nb" style="left:122.4px;width:164.2px"><span></span></div><div class="td" style="left:286.6px;width:164.4px"><span><a class="lnk">CALLMN DASHBOARD</a></span></div><div class="td" style="left:451px;width:164.2px"><span></span></div><div class="td" style="left:615.2px;width:164.2px"><span></span></div><div class="td" style="left:779.4px;width:164.2px"><span></span></div><div class="td" style="left:943.6px;width:164.2px"><span></span></div><div class="td" style="left:1107.8px;width:164.2px"><span></span></div><div class="td lastc" style="left:1272px;width:164.3px"><span></span></div></div>
<i class="vs" style="left:285.9px"></i><i class="vs" style="left:450.6px"></i><i class="vs" style="left:613.8px"></i><i class="vs" style="left:778.9px"></i><i class="vs" style="left:942.2px"></i><i class="vs" style="left:1107.1px"></i><i class="vs" style="left:1271.5px"></i></div>
<div class="pager"><svg class="pg dis" style="left:14.5px" viewBox="0 0 16 16"><path d="M4 3h2v10H4zM12.5 3v10L6.5 8z"/></svg><svg class="pg dis" style="left:49px" viewBox="0 0 16 16"><path d="M11 3v10L5 8z"/></svg><span class="pn cur" style="left:72px">1</span><span class="pn" style="left:102.7px">2</span><span class="pn" style="left:134.3px">3</span><span class="pn" style="left:165.5px">4</span><span class="pn" style="left:197px">5</span><span class="pn" style="left:228.3px">...</span><svg class="pg" style="left:267px" viewBox="0 0 16 16"><path d="M5 3v10l6-5z"/></svg><svg class="pg" style="left:298px" viewBox="0 0 16 16"><path d="M10 3h2v10h-2zM3.5 3v10l6-5z"/></svg><div class="psel"><span>200</span><svg viewBox="0 0 10 6"><path d="M0 0h10L5 6z"/></svg></div><span class="ipp">items per page</span><span class="pinfo">1 - 200 of 1247 items</span></div>
</div>
<div class="tab" style="top:203.5px;height:104.5px"><svg class="ti" viewBox="0 0 21 21"><circle cx="10.5" cy="10.5" r="10.2" fill="#cd1426"/><text x="10.5" y="15.5" text-anchor="middle" font-family="Liberation Sans, Arial, sans-serif" font-weight="bold" font-size="14" fill="#fff" transform="rotate(90 10.5 10.5)">?</text></svg><span style="top:46.5px;letter-spacing:.1px">Help</span></div>
<div class="tab" style="top:319.5px;height:162.5px"><svg class="ti" style="top:16px" viewBox="0 0 21 21"><rect x="4" y="1" width="15" height="20" rx="3" fill="#cd1426"/><path fill="#cd1426" d="M5 3.5L1.5 4.2 5 8z"/><path stroke="#f6c9cd" stroke-width="1.5" d="M11 5v11"/><path stroke="#fff" stroke-width="1.8" d="M14 5v11"/></svg><span style="top:48.5px;letter-spacing:.6px">Feedback</span></div>
<div class="tab" style="top:495px;height:163px"><svg class="ti" style="top:19.5px;left:4.5px" viewBox="0 0 21 21"><path fill="#cd1426" d="M21 .500L.500 10.2l5.5 2.3zM21 .500L7.5 13.5v6.5l3-4 5 2.5z"/></svg><span style="top:49px;letter-spacing:.35px">Releases</span></div>
</body></html>
